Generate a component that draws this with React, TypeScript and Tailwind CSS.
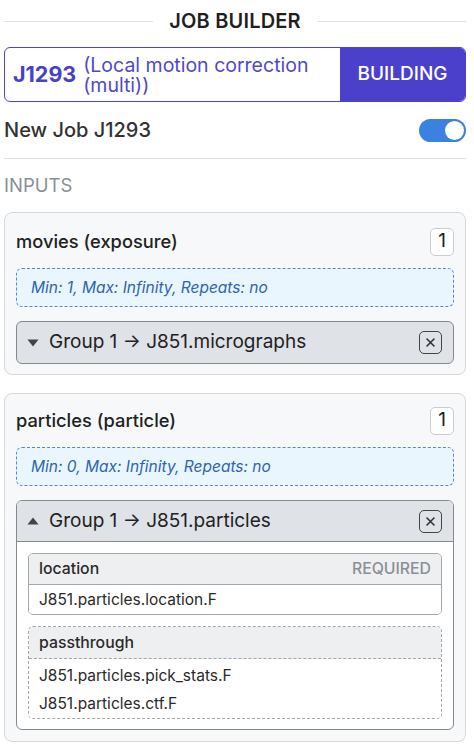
import React from "react";

function XBox() {
  return (
    <div className="w-[23px] h-[23px] border-[1.5px] border-[#444] rounded-[5px] flex items-center justify-center">
      <svg width="11" height="11" viewBox="0 0 11 11">
        <path d="M2 2L9 9M9 2L2 9" stroke="#333" strokeWidth="1.6" strokeLinecap="round" />
      </svg>
    </div>
  );
}

function Badge() {
  return (
    <div className="w-[24px] h-[28px] border border-[#c9ccd0] rounded-[5px] bg-white flex items-center justify-center text-[19px] text-[#222]">
      1
    </div>
  );
}

function Info({ text }: { text: string }) {
  return (
    <div className="mx-[11px] h-[39px] border-[1.5px] border-dashed border-[#5d86c0] rounded-[6px] bg-[#e9f6fe] flex items-center pl-[14px] text-[15.5px] italic text-[#2f63b0]">
      {text}
    </div>
  );
}

export default function App() {
  return (
    <div className="w-[474px] h-[749px] bg-white overflow-hidden" style={{ fontFamily: "Inter, 'Noto Sans', sans-serif" }}>
      <div className="ml-[4px] w-[462px]">
        {/* Header */}
        <div className="h-[42px] flex items-center gap-[16px]">
          <div className="flex-1 h-px bg-[#e2e2e2]" />
          <div className="text-[20px] font-semibold text-[#1f1f1f] tracking-[0.2px]">JOB BUILDER</div>
          <div className="flex-1 h-px bg-[#e2e2e2]" />
        </div>
        {/* Job box */}
        <div className="mt-[5px] h-[55px] flex border-[1.5px] border-[#4b44cc] rounded-[6px] overflow-hidden">
          <div className="flex-1 flex items-center pl-[8px] gap-[7px]">
            <div className="text-[21.5px] font-bold text-[#4740c8]">J1293</div>
            <div className="text-[19.5px] leading-[20px] text-[#4f48cc] pt-[1px]">
              <div>(Local motion correction</div>
              <div>(multi))</div>
            </div>
          </div>
          <div className="w-[125px] bg-[#4a40cc] flex items-center justify-center text-white text-[19px] font-medium">
            BUILDING
          </div>
        </div>
        {/* New Job */}
        <div className="h-[56px] flex items-center justify-between">
          <div className="text-[20px] font-medium text-[#333]">New Job J1293</div>
          <div className="w-[47px] h-[23px] rounded-full bg-[#3b82e0] flex items-center justify-end pr-[2px]">
            <div className="w-[19px] h-[19px] rounded-full bg-white" />
          </div>
        </div>
        <div className="h-px bg-[#e2e2e2]" />
        <div className="h-[53px] flex items-center text-[18.5px] text-[#8a8f96]">INPUTS</div>

        {/* Card 1 */}
        <div className="border border-[#d6d8db] rounded-[8px] bg-[#f7f8fa] pb-[10px]">
          <div className="h-[55px] flex items-center justify-between pl-[11px] pr-[11px] pt-[2px]">
            <div className="text-[18.3px] font-medium text-[#222]">movies (exposure)</div>
            <Badge />
          </div>
          <Info text="Min: 1, Max: Infinity, Repeats: no" />
          <div className="mx-[11px] mt-[14px] h-[43px] border-[1.5px] border-[#85888c] rounded-[6px] bg-[#dfe2e6] flex items-center justify-between pl-[10px] pr-[11px]">
            <div className="flex items-center gap-[10px] text-[19px] text-[#222]">
              <svg width="12" height="8" viewBox="0 0 12 8"><path d="M0.5 0.5H11.5L6 7.5Z" fill="#444" /></svg>
              <span>Group 1 → J851.micrographs</span>
            </div>
            <XBox />
          </div>
        </div>

        {/* Card 2 */}
        <div className="mt-[18px] border border-[#d6d8db] rounded-[8px] bg-[#f7f8fa] pb-[11px]">
          <div className="h-[53px] flex items-center justify-between pl-[11px] pr-[11px]">
            <div className="text-[18.3px] font-medium text-[#222]">particles (particle)</div>
            <Badge />
          </div>
          <Info text="Min: 0, Max: Infinity, Repeats: no" />
          <div className="mx-[11px] mt-[14px] border-[1.5px] border-[#85888c] rounded-[6px] overflow-hidden bg-white">
            <div className="h-[41px] bg-[#dfe2e6] border-b-[1.5px] border-[#85888c] flex items-center justify-between pl-[10px] pr-[11px]">
              <div className="flex items-center gap-[10px] text-[19px] text-[#222]">
                <svg width="12" height="8" viewBox="0 0 12 8"><path d="M0.5 7.5H11.5L6 0.5Z" fill="#444" /></svg>
                <span>Group 1 → J851.particles</span>
              </div>
              <XBox />
            </div>
            <div className="px-[11px] pt-[11px] pb-[10px]">
              <div className="border-[1.5px] border-[#a3a6aa] rounded-[5px] overflow-hidden">
                <div className="h-[31px] bg-[#eeeff1] border-b-[1.5px] border-[#a3a6aa] flex items-center justify-between pl-[10px] pr-[10px] text-[15.8px]">
                  <span className="font-medium text-[#2a2a2a]">location</span>
                  <span className="text-[#8a8f96] font-medium">REQUIRED</span>
                </div>
                <div className="h-[29px] bg-white flex items-center pl-[10px] text-[15.5px] text-[#2a2a2a]">
                  J851.particles.location.F
                </div>
              </div>
              <div className="mt-[11px] border-[1.5px] border-dashed border-[#a3a6aa] rounded-[5px] overflow-hidden">
                <div className="h-[32px] bg-[#eeeff1] border-b-[1.5px] border-dashed border-[#a3a6aa] flex items-center pl-[10px] text-[15.8px] font-medium text-[#2a2a2a]">
                  passthrough
                </div>
                <div className="h-[31px] bg-white flex items-center pl-[10px] text-[15.5px] text-[#2a2a2a] pt-[2px]">
                  J851.particles.pick_stats.F
                </div>
                <div className="h-[28px] bg-white flex items-center pl-[10px] text-[15.5px] text-[#2a2a2a]">
                  J851.particles.ctf.F
                </div>
              </div>
            </div>
          </div>
        </div>
      </div>
    </div>
  );
}
